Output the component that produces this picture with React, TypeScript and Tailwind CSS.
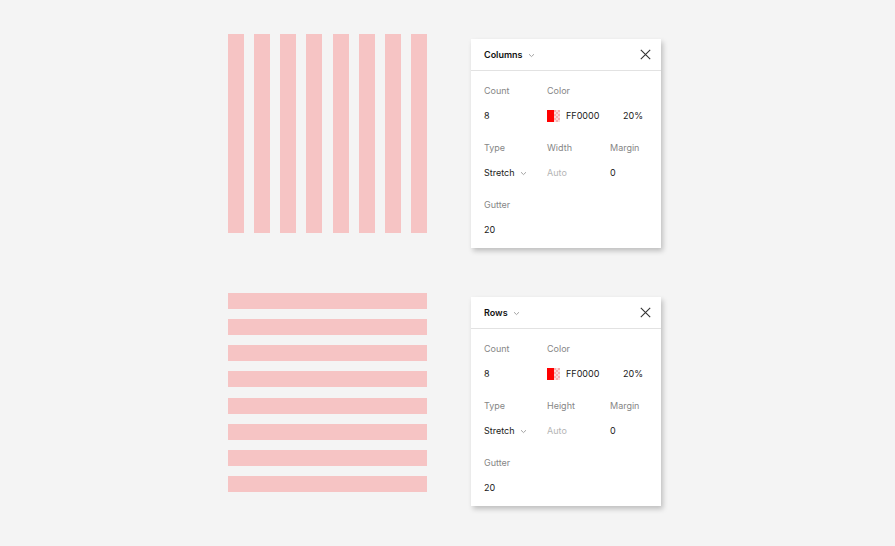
import React from "react";

const font = { fontFamily: "Inter, 'Noto Sans', sans-serif" };

function Chevron() {
  return (
    <svg width="7" height="5" viewBox="0 0 7 5" className="ml-[5px] mt-[1px]">
      <path d="M1 1.2 L3.5 3.6 L6 1.2" fill="none" stroke="#9a9a9a" strokeWidth="0.9" />
    </svg>
  );
}

function CloseIcon() {
  return (
    <svg width="11" height="11" viewBox="0 0 11 11">
      <path d="M0.8 0.8 L10.2 10.2 M10.2 0.8 L0.8 10.2" stroke="#333" strokeWidth="1.1" />
    </svg>
  );
}

function Swatch() {
  return (
    <svg width="13" height="12" viewBox="0 0 13 12" className="mr-[6px]">
      <rect x="0" y="0" width="13" height="12" fill="#fbdcdc" />
      {[0, 1, 2, 3, 4, 5].map((r) =>
        [0, 1, 2].map((c) =>
          (r + c) % 2 === 0 ? (
            <rect key={`${r}-${c}`} x={7 + c * 2} y={r * 2} width="2" height="2" fill="#f4b3b3" />
          ) : null
        )
      )}
      <rect x="0" y="0" width="7" height="12" fill="#ff0000" />
    </svg>
  );
}

function Field({ label, children }: { label: string; children: React.ReactNode }) {
  return (
    <div className="flex flex-col">
      <div className="h-[12px] leading-[12px] text-[9px] text-[#868686]">{label}</div>
      <div className="h-[12px] mt-[13px] leading-[12px] text-[9px] text-[#1a1a1a] flex items-center">
        {children}
      </div>
    </div>
  );
}

function Panel({ title, sizeLabel }: { title: string; sizeLabel: string }) {
  return (
    <div
      className="w-[190px] bg-white shadow-[2px_3px_5px_rgba(0,0,0,0.22)] flex flex-col"
      style={font}
    >
      <div className="h-[32px] border-b border-[#e2e2e2] flex items-center justify-between pl-[13px] pr-[10px]">
        <div className="flex items-center text-[9px] font-semibold text-[#111]">
          {title}
          <Chevron />
        </div>
        <CloseIcon />
      </div>
      <div className="pt-[14px] pb-[12px] px-[13px] grid grid-cols-[63px_63px_1fr] gap-y-[20px]">
        <Field label="Count">8</Field>
        <div className="col-span-2">
          <Field label="Color">
            <Swatch />
            <span className="w-[57px]">FF0000</span>
            <span>20%</span>
          </Field>
        </div>
        <Field label="Type">
          Stretch
          <Chevron />
        </Field>
        <Field label={sizeLabel}>
          <span className="text-[#b5b5b5]">Auto</span>
        </Field>
        <Field label="Margin">0</Field>
        <Field label="Gutter">20</Field>
      </div>
    </div>
  );
}

export default function App() {
  const bars = [0, 1, 2, 3, 4, 5, 6, 7];
  return (
    <div className="w-[895px] h-[546px] bg-[#f4f4f4] pt-[34px] pl-[228px] flex flex-col gap-[45px]">
      <div className="flex items-start gap-[44px]">
        <div className="w-[199px] h-[199px] flex justify-between">
          {bars.map((i) => (
            <div key={i} className="w-[16px] h-full bg-[#f6c4c4]" />
          ))}
        </div>
        <div className="mt-[5px]">
          <Panel title="Columns" sizeLabel="Width" />
        </div>
      </div>
      <div className="flex items-start gap-[44px]">
        <div className="w-[199px] h-[199px] flex flex-col justify-between">
          {bars.map((i) => (
            <div key={i} className="h-[16px] w-full bg-[#f6c4c4]" />
          ))}
        </div>
        <div className="mt-[4px]">
          <Panel title="Rows" sizeLabel="Height" />
        </div>
      </div>
    </div>
  );
}
